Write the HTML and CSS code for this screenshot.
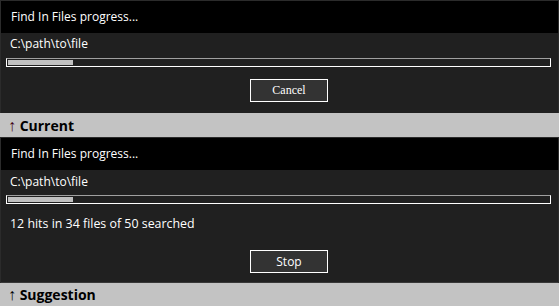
FILE: index.html
```html
<!DOCTYPE html>
<html lang="en">
<head>
    <meta charset="UTF-8">
    <link rel="stylesheet" href="styles.css">
</head>
<body>
    <div class="window">
        <div class="title">Find In Files progress...</div>
        <div class="content first">
            <div class="path">C:\path\to\file</div>
            <div class="progress"><div class="fill"></div></div>
            <div class="actions">
                <button class="btn btn-old">Cancel</button>
            </div>
        </div>
    </div>
    <div class="label"><span class="arrow red">↑</span> Current</div>
    <div class="window">
        <div class="title">Find In Files progress...</div>
        <div class="content second">
            <div class="path">C:\path\to\file</div>
            <div class="progress"><div class="fill"></div></div>
            <div class="hits">12 hits in 34 files of 50 searched</div>
            <div class="actions">
                <button class="btn">Stop</button>
            </div>
        </div>
    </div>
    <div class="label bottom"><span class="arrow">↑</span> Suggestion</div>
</body>
</html>
```

FILE: styles.css
```css
body {
    margin: 0;
    background-color: #c3c3c3;
    font-family: "Open Sans", "Noto Sans", sans-serif;
    font-size: 12px;
    color: #ffffff;
}
.window {
    border: 1px solid #2b2b2b;
    border-bottom: none;
}
.title {
    background-color: #000000;
    height: 32px;
    line-height: 32px;
    padding-left: 10px;
}
.content {
    background-color: #202020;
}
.first {
    height: 80px;
    padding-top: 3px;
    box-sizing: border-box;
}
.second {
    height: 113px;
    padding-top: 4px;
    box-sizing: border-box;
    border-bottom: 1px solid #383838;
}
.path, .hits {
    height: 16px;
    line-height: 16px;
    padding-left: 9px;
}
.hits {
    font-size: 12.4px;
}
.progress {
    margin: 6px 7px 0 5px;
    height: 9px;
    box-sizing: border-box;
    border: 1px solid #ffffff;
    border-top-color: #a0a0a0;
    padding: 1px;
}
.fill {
    width: 65px;
    height: 100%;
    background-color: #c0c0c0;
}
.second .progress {
    margin-top: 5px;
}
.hits {
    margin-top: 12px;
}
.actions {
    display: flex;
    padding-left: 249px;
    margin-top: 12px;
}
.second .actions {
    margin-top: 18px;
}
.btn {
    width: 78px;
    height: 23px;
    border: 1px solid #ffffff;
    background-color: #333333;
    color: #ffffff;
    font-family: "Open Sans", sans-serif;
    font-size: 12px;
    padding: 0;
}
.btn-old {
    font-family: "Liberation Serif", serif;
    font-size: 12px;
}
.label {
    height: 24px;
    line-height: 24px;
    padding-left: 8px;
    color: #000000;
    font-weight: bold;
    font-size: 14px;
}
.bottom {
    height: 22px;
    line-height: 22px;
}
.arrow {
    font-weight: normal;
    font-size: 16px;
}
.red {
    color: #400010;
}
```
